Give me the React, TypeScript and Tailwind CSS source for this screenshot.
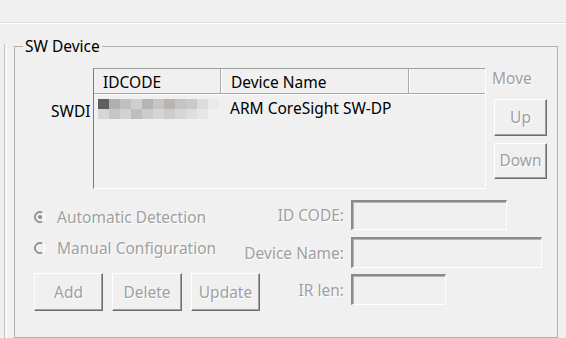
import React from 'react';

// --- shared styles ---
const font = { fontFamily: '"Noto Sans", "Liberation Sans", sans-serif' };
const dim = 'text-[#a0a0a0] [text-shadow:1px_1px_0_#ffffff]';
const raised =
  'bg-[#f0f0f0] border border-t-white border-l-white border-r-[#6e6e6e] border-b-[#6e6e6e] shadow-[inset_-1px_-1px_0_#a0a0a0] flex items-center justify-center text-[15.5px]';
const sunken =
  'bg-[#f0f0f0] border-t-2 border-l-2 border-r border-b border-t-[#8a8a8a] border-l-[#8a8a8a] border-r-white border-b-white shadow-[inset_1px_1px_0_#b4b4b4]';

function Radio({ checked }: { checked?: boolean }) {
  return (
    <svg width="12" height="12" viewBox="0 0 12 12" className="shrink-0">
      <path d="M8.5 1.67 A5 5 0 1 0 8.5 10.33" fill="none" stroke="#8a8a8a" strokeWidth="1.6" />
      <path d="M8.5 10.33 A5 5 0 0 0 8.5 1.67" fill="none" stroke="#ffffff" strokeWidth="1.4" />
      {checked && <circle cx="6" cy="6" r="2.1" fill="#8f8f8f" />}
    </svg>
  );
}

// pixelated, blurred idcode (censored in the original)
const blob = [
  ['#5e5e5e', '#b0b0b0', '#c0c0c0', '#cfcfcf', '#b4b4b4', '#c6c6c6', '#bab4b0', '#c4c4c4', '#c9c9c9', '#dcdcdc', '#eaeaea'],
  ['#d6d6d6', '#c6c6c6', '#d2d2d2', '#bebebe', '#cbcbcb', '#d4d4d4', '#cccccc', '#d6d6d6', '#dedede', '#e6e6e6', '#efefef'],
];

export default function App() {
  return (
    <div className="w-[566px] h-[338px] overflow-hidden bg-[#f0f0f0] text-black flex flex-col" style={font}>
      {/* top separator */}
      <div className="h-[23px] shrink-0 border-b border-[#dcdcdc] shadow-[0_1px_0_#ffffff]" />

      <div className="flex flex-1 pl-[4px]">
        {/* neighbouring panel edge */}
        <div className="mt-[21px] w-[2px] border-l border-[#c4c4c4] shadow-[1px_0_0_#ffffff]" />

        {/* SW Device group */}
        <fieldset className="ml-[8px] mt-[13px] w-[544px] border border-[#b0b0b0] px-0 pt-[12px] pb-0">
          <legend className="ml-[8px] px-[2px] h-[20px] leading-[20px] text-[15.5px]">SW Device</legend>

          {/* list row */}
          <div className="flex items-start">
            <div className="w-[78px] pl-[36px] pt-[33px] text-[15.5px] leading-[20px]">SWDI</div>

            <div className="w-[393px] h-[121px] border-t border-l border-t-[#a0a0a0] border-l-[#7a7a7a] border-r border-b border-r-white border-b-white flex flex-col">
              <div className="flex h-[25px] text-[15.5px] leading-[26px] border-b border-[#a9a9a9] shadow-[0_1px_0_#ffffff]">
                <div className="w-[127px] pl-[9px] border-r border-[#a9a9a9] shadow-[1px_0_0_#ffffff]">IDCODE</div>
                <div className="w-[188px] pl-[10px] border-r border-[#a9a9a9] shadow-[1px_0_0_#ffffff]">Device Name</div>
                <div className="w-[76px]" />
              </div>
              <div className="flex h-[28px] items-center">
                <div className="w-[127px] pl-[4px] pt-[2px] flex flex-col blur-[0.6px]">
                  {blob.map((row, i) => (
                    <div key={i} className="flex">
                      {row.map((c, j) => (
                        <div key={j} className="w-[11px] h-[10px]" style={{ background: c }} />
                      ))}
                    </div>
                  ))}
                </div>
                <div className="pl-[9px] text-[15.5px] leading-[20px]">ARM CoreSight SW-DP</div>
              </div>
            </div>

            <div className="ml-[6px] flex flex-col">
              <div className={`text-[15.5px] leading-[20px] ${dim}`}>Move</div>
              <button className={`ml-[2px] mt-[11px] w-[53px] h-[37px] ${raised} ${dim}`}>Up</button>
              <button className={`ml-[2px] mt-[7px] w-[53px] h-[36px] ${raised} ${dim}`}>Down</button>
            </div>
          </div>

          {/* detection + fields */}
          <div className="mt-[11px] flex flex-col gap-[7px] text-[15.5px] leading-[20px]">
            <div className="flex items-center h-[30px]">
              <div className="w-[246px] pl-[19px] pt-[3px] flex items-center gap-[11px]">
                <Radio checked />
                <span className={dim}>Automatic Detection</span>
              </div>
              <span className={`w-[83px] whitespace-nowrap flex justify-end ${dim}`}>ID CODE:</span>
              <div className={`ml-[7px] w-[156px] h-[30px] ${sunken}`} />
            </div>

            <div className="flex items-center h-[31px]">
              <div className="w-[246px] pl-[19px] pb-[9px] flex items-center gap-[11px]">
                <Radio />
                <span className={dim}>Manual Configuration</span>
              </div>
              <span className={`w-[83px] whitespace-nowrap flex justify-end ${dim}`}>Device Name:</span>
              <div className={`ml-[7px] w-[191px] h-[31px] ${sunken}`} />
            </div>

            <div className="flex items-start -mt-[2px]">
              <div className="w-[246px] pl-[19px] flex gap-[9px]">
                <button className={`w-[69px] h-[38px] ${raised} ${dim}`}>Add</button>
                <button className={`w-[70px] h-[38px] ${raised} ${dim}`}>Delete</button>
                <button className={`w-[69px] h-[38px] ${raised} ${dim}`}>Update</button>
              </div>
              <span className={`w-[83px] mt-[7px] whitespace-nowrap flex justify-end ${dim}`}>IR len:</span>
              <div className={`ml-[7px] mt-[1px] w-[95px] h-[31px] ${sunken}`} />
            </div>
          </div>
        </fieldset>
      </div>
    </div>
  );
}
